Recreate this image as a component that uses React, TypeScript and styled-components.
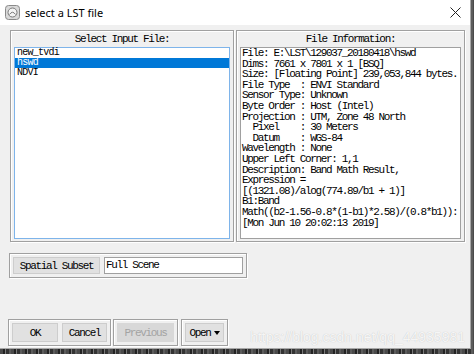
import React from 'react'
import styled, { createGlobalStyle } from 'styled-components'

const mono = '"Liberation Mono", "DejaVu Sans Mono", monospace'

const GlobalStyle = createGlobalStyle`
  html, body { margin: 0; padding: 0; }
  body { background: #2e2e2e; overflow: hidden; }
  * { box-sizing: border-box; }
`

const Screen = styled.div`
  width: 474px;
  height: 354px;
  overflow: hidden;
  background: repeating-linear-gradient(90deg, #4a4a4a 0 3px, #222 3px 5px, #7a7a7a 5px 6px, #333 6px 9px, #5c5c5c 9px 11px);
`

const Window = styled.div`
  position: relative;
  width: 471px;
  height: 349px;
  background: #f0f0f0;
  border-right: 1px solid #a8a8a8;
  border-bottom: 1px solid #a8a8a8;
  display: flex;
  flex-direction: column;
`

const TitleBar = styled.div`
  height: 25px;
  background: #fff;
  display: flex;
  align-items: center;
  padding-left: 5px;
`

const Title = styled.span`
  margin-left: 5px;
  font-family: "Noto Sans", "Liberation Sans", sans-serif;
  font-size: 11px;
  color: #000;
`

const CloseButton = styled.div`
  margin-left: auto;
  margin-right: 9px;
  display: flex;
`

const Body = styled.div`
  flex: 1;
  display: flex;
  flex-direction: column;
  padding: 5px 0 0 8px;
  font-family: ${mono};
  font-size: 11px;
  letter-spacing: -1.35px;
  color: #000;
`

const MainRow = styled.div`
  display: grid;
  grid-template-columns: 224px 229px;
  column-gap: 2px;
  margin-left: 2px;
  height: 212px;
`

const GroupFrame = styled.div`
  display: flex;
  flex-direction: column;
  padding: 0 3px 2px;
  border: 1px solid #a0a0a0;
  box-shadow: inset 1px 1px 0 #fff, 1px 1px 0 #fff;
`

const FrameHeader = styled.div`
  height: 16px;
  display: flex;
  align-items: center;
  justify-content: center;
`

const ListBox = styled.div`
  flex: 1;
  background: #fff;
  border: 1px solid #7eb4ea;
`

const ListItem = styled.div<{ $selected?: boolean }>`
  height: 10px;
  line-height: 10px;
  font-size: 10px;
  letter-spacing: -0.75px;
  padding-left: 2px;
  background: ${({ $selected }) => ($selected ? '#0078d7' : 'transparent')};
  color: ${({ $selected }) => ($selected ? '#fff' : '#000')};
`

const InfoBox = styled.div`
  flex: 1;
  background: #fff;
  border: 1px solid #a0a0a0;
  padding: 0 0 0 1px;
  white-space: pre;
  line-height: 10.6px;
  overflow: hidden;
`

const SubsetFrame = styled(GroupFrame)`
  flex-direction: row;
  gap: 4px;
  width: 238px;
  height: 25px;
  margin: 11px 0 0 1px;
  padding: 3px;
`

const Button = styled.button<{ $width: number }>`
  width: ${({ $width }) => $width}px;
  height: 100%;
  padding: 0;
  background: #e1e1e1;
  border: 1px solid #cdcdcd;
  font: inherit;
  letter-spacing: inherit;
  color: #000;
  display: flex;
  align-items: center;
  justify-content: center;
  gap: 3px;
  &:disabled {
    background: #d8d8d8;
    border-color: #d8d8d8;
    color: #a3a3a3;
  }
`

const TextField = styled.div`
  flex: 1;
  background: #fff;
  border: 1px solid #a0a0a0;
  padding-left: 1px;
  line-height: 14px;
`

const Footer = styled.div`
  display: flex;
  margin-top: 41px;
  height: 27px;
`

const ButtonGroup = styled(GroupFrame)<{ $offset: number }>`
  flex-direction: row;
  gap: 4px;
  padding: 3px;
  margin-left: ${({ $offset }) => $offset}px;
`

const Caret = styled.span`
  width: 0;
  height: 0;
  border-left: 3px solid transparent;
  border-right: 3px solid transparent;
  border-top: 4px solid #000;
`

const Watermark = styled.div`
  position: absolute;
  right: 5px;
  bottom: 3px;
  font-family: "Liberation Sans", Arial, sans-serif;
  font-size: 14px;
  color: rgba(255, 255, 255, 0.85);
  text-shadow: 0 0 1px rgba(0, 0, 0, 0.22);
`

const infoLines = [
  'File: E:\\LST\\129037_20180418\\hswd',
  'Dims: 7661 x 7801 x 1 [BSQ]',
  'Size: [Floating Point] 239,053,844 bytes.',
  'File Type  : ENVI Standard',
  'Sensor Type: Unknown',
  'Byte Order : Host (Intel)',
  'Projection : UTM, Zone 48 North',
  '  Pixel    : 30 Meters',
  '  Datum    : WGS-84',
  'Wavelength : None',
  'Upper Left Corner: 1,1',
  'Description: Band Math Result,',
  'Expression =',
  '[(1321.08)/alog(774.89/b1 + 1)]',
  'B1:Band',
  'Math((b2-1.56-0.8*(1-b1)*2.58)/(0.8*b1)):',
  '[Mon Jun 10 20:02:13 2019]',
]

const files = ['new_tvdi', 'hswd', 'NDVI']

function AppIcon() {
  return (
    <svg width="15" height="15" viewBox="0 0 15 15">
      <rect x="0.5" y="0.5" width="14" height="14" rx="3" fill="#d9d9d9" stroke="#8a8a8a" />
      <circle cx="7.5" cy="7.5" r="4.5" fill="#f4f4f4" stroke="#7a7a7a" />
      <path d="M4.5 9.5 Q7.5 5 10.5 9.5" fill="none" stroke="#7a7a7a" />
    </svg>
  )
}

export default function App() {
  return (
    <Screen>
      <GlobalStyle />
      <Window>
        <TitleBar>
          <AppIcon />
          <Title>select a LST file</Title>
          <CloseButton>
            <svg width="11" height="11" viewBox="0 0 11 11">
              <path d="M0.5 0.5 L10.5 10.5 M10.5 0.5 L0.5 10.5" stroke="#222" strokeWidth="1" />
            </svg>
          </CloseButton>
        </TitleBar>
        <Body>
          <MainRow>
            <GroupFrame>
              <FrameHeader>Select Input File:</FrameHeader>
              <ListBox>
                {files.map(f => (
                  <ListItem key={f} $selected={f === 'hswd'}>
                    {f}
                  </ListItem>
                ))}
              </ListBox>
            </GroupFrame>
            <GroupFrame>
              <FrameHeader>File Information:</FrameHeader>
              <InfoBox>{infoLines.join('\n')}</InfoBox>
            </GroupFrame>
          </MainRow>
          <SubsetFrame>
            <Button $width={87}>Spatial Subset</Button>
            <TextField>Full Scene</TextField>
          </SubsetFrame>
          <Footer>
            <ButtonGroup $offset={0}>
              <Button $width={46}>OK</Button>
              <Button $width={45}>Cancel</Button>
            </ButtonGroup>
            <ButtonGroup $offset={2}>
              <Button $width={57} disabled>
                Previous
              </Button>
            </ButtonGroup>
            <ButtonGroup $offset={3}>
              <Button $width={39}>
                Open
                <Caret />
              </Button>
            </ButtonGroup>
          </Footer>
        </Body>
        <Watermark>https://blog.csdn.net/qq_44935981</Watermark>
      </Window>
    </Screen>
  )
}
